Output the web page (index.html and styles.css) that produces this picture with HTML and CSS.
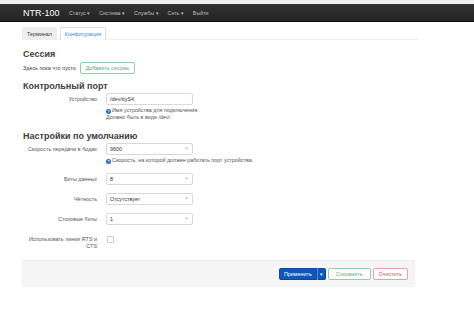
FILE: index.html
```html
<!DOCTYPE html>
<html lang="ru">
<head>
    <meta charset="UTF-8">
    <title>NTR-100</title>
    <link rel="stylesheet" href="styles.css">
</head>
<body>
    <div class="topline"></div>
    <!-- верхняя панель -->
    <div class="navbar">
        <span class="brand">NTR-100</span>
        <div class="menu">
            <a href="#">Статус ▾</a>
            <a href="#">Система ▾</a>
            <a href="#">Службы ▾</a>
            <a href="#">Сеть ▾</a>
            <a href="#">Выйти</a>
        </div>
    </div>

    <div class="page">
        <div class="tabs">
            <span class="tab">Терминал</span>
            <span class="tab active">Конфигурация</span>
        </div>

        <h2 class="first">Сессия</h2>
        <div class="session">
            <span>Здесь пока что пусто</span>
            <button class="btn btn-green">Добавить сессию</button>
        </div>

        <h2>Контрольный порт</h2>
        <div class="row top">
            <label>Устройство</label>
            <div class="field">
                <div class="input">/dev/ttyS4</div>
                <div class="help"><i>?</i>Имя устройства для подключения.<br>Должно быть в виде /dev/.</div>
            </div>
        </div>

        <h2 class="gap">Настройки по умолчанию</h2>
        <div class="row top">
            <label>Скорость передачи в бодах</label>
            <div class="field">
                <div class="input select">9600</div>
                <div class="help nowrap"><i>?</i>Скорость, на которой должен работать порт устройства.</div>
            </div>
        </div>
        <div class="row r2">
            <label>Биты данных</label>
            <div class="field"><div class="input select">8</div></div>
        </div>
        <div class="row r3">
            <label>Чётность</label>
            <div class="field"><div class="input select">Отсутствует</div></div>
        </div>
        <div class="row r3">
            <label>Стоповые биты</label>
            <div class="field"><div class="input select">1</div></div>
        </div>
        <div class="row r4">
            <label class="two">Использовать линии RTS и CTS</label>
            <div class="field"><span class="check"></span></div>
        </div>

        <div class="actions">
            <div class="split">
                <button class="btn btn-blue">Применить</button>
                <button class="btn btn-blue caret">▾</button>
            </div>
            <button class="btn btn-green wide">Сохранить</button>
            <button class="btn btn-red">Очистить</button>
        </div>
    </div>
</body>
</html>
```

FILE: styles.css
```css
body {
    margin: 0;
    font-family: "Liberation Sans", Arial, sans-serif;
    font-size: 5.4px;
    color: #404040;
    background-color: white;
}

.topline {
    height: 4px;
    background-color: #eeeeee;
}

.navbar {
    display: flex;
    align-items: center;
    height: 17px;
    padding-left: 23px;
    background: linear-gradient(#333333, #222222);
    border-bottom: 1px solid #111;
}

.brand {
    color: white;
    font-size: 9px;
    width: 46px;
}

.menu {
    display: flex;
    gap: 9px;
}

.menu a {
    color: #bfbfbf;
    text-decoration: none;
    font-size: 5.3px;
}

.page {
    width: 396px;
    margin-left: 22px;
}

.tabs {
    display: flex;
    gap: 3px;
    margin-top: 5px;
    height: 12px;
    border-bottom: 1px solid #eeeeee;
}

.tab {
    display: flex;
    align-items: center;
    padding: 0 4px;
    background-color: #eeeeee;
    border: 1px solid #eeeeee;
    border-bottom: none;
    border-radius: 2px 2px 0 0;
}

.tab.active {
    background-color: white;
    border-color: #dddddd;
    color: #3b8bd9;
    margin-bottom: -1px;
    height: 12px;
}

h2 {
    font-size: 9px;
    font-weight: bold;
    color: #404040;
    margin: 0;
    padding-left: 1px;
    line-height: 11px;
}

h2.first {
    margin-top: 9px;
}

h2.gap {
    margin-top: 10px;
}

.session {
    display: flex;
    align-items: center;
    gap: 4px;
    margin-top: 2px;
    padding-left: 1px;
}

.session + h2 {
    margin-top: 7px;
}

.btn {
    font-family: "Liberation Sans", Arial, sans-serif;
    font-size: 5.4px;
    height: 12px;
    padding: 0 5px;
    background-color: white;
    border: 1px solid #ccc;
    border-radius: 2px;
}

.btn.wide {
    padding: 0 7px;
}

.btn-green {
    color: #4caf7a;
    border-color: #8fd0ab;
}

.btn-red {
    color: #e05050;
    border-color: #eaa0a0;
}

.btn-blue {
    color: white;
    background-color: #0d58b8;
    border-color: #0a4a9e;
}

.row {
    display: flex;
}

.row.top {
    margin-top: 1px;
}

.row.r2 {
    margin-top: 9px;
}

.row.r3 {
    margin-top: 8px;
}

.row.r4 {
    margin-top: 11px;
}

.row label {
    width: 75px;
    text-align: right;
    padding-top: 3px;
    margin-right: 9px;
    color: #555;
}

.row label.two {
    padding-top: 0;
    line-height: 7px;
}

.input {
    box-sizing: border-box;
    width: 87px;
    height: 12px;
    padding: 0 3px;
    line-height: 10px;
    border: 1px solid #d9d9d9;
    border-radius: 2px;
    color: #333;
}

.select {
    position: relative;
}

.select::after {
    content: "⌄";
    position: absolute;
    right: 3px;
    top: -2px;
    color: #888;
    font-size: 6px;
}

.help {
    margin-top: 2px;
    line-height: 7px;
    color: #555;
}

.help.nowrap {
    white-space: nowrap;
}

.help i {
    display: inline-block;
    width: 5px;
    height: 5px;
    margin-right: 1px;
    border-radius: 50%;
    background-color: #1d63b8;
    color: white;
    font-size: 4px;
    font-style: normal;
    font-weight: bold;
    text-align: center;
    line-height: 5px;
    vertical-align: -1px;
}

.check {
    display: inline-block;
    width: 5px;
    height: 5px;
    margin-left: 1px;
    border: 1px solid #ccc;
    border-radius: 1px;
}

.actions {
    display: flex;
    justify-content: flex-end;
    gap: 2px;
    margin-top: 10px;
    margin-right: 3px;
    padding: 7px 7px 7px 0;
    background-color: #f5f5f5;
    border-top: 1px solid #eee;
}

.split {
    display: flex;
}

.split .btn {
    padding: 0 4px;
    border-radius: 2px 0 0 2px;
}

.split .caret {
    padding: 0 2px;
    border-radius: 0 2px 2px 0;
    border-left: 1px solid #5b8fd6;
}
```
